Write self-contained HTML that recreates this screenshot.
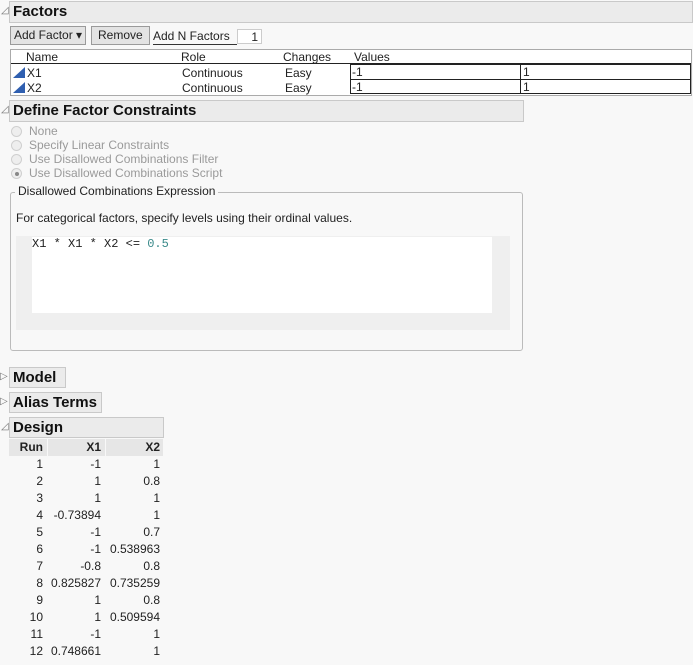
<!DOCTYPE html>
<html><head><style>
body{margin:0;width:693px;height:665px;background:#f8f8f8;font-family:"Liberation Sans",sans-serif;font-size:12px;color:#222;position:relative;overflow:hidden}
.a{position:absolute}
.hdr{position:absolute;background:#ebebeb;border:1px solid #c9c9c9;font-weight:bold;font-size:15px;color:#111;box-sizing:border-box;padding-left:3px;line-height:19px}
.tri{position:absolute;font-size:10px;color:#777}
.btn{position:absolute;background:#e3e3e3;border:1px solid #9a9a9a;box-sizing:border-box;height:19px;line-height:17px;padding-left:3px}
.rad{position:absolute;left:11px;width:11px;height:11px;border-radius:50%;border:1px solid #cfcfcf;background:#eee;box-sizing:border-box}
.rt{position:absolute;left:29px;color:#9a9a9a}
.dt{position:absolute;text-align:right;height:17px;line-height:17px}
</style></head><body>
<div class="tri" style="left:1px;top:5px">◿</div>
<div class="hdr" style="left:9px;top:1px;width:684px;height:22px">Factors</div>
<div class="btn" style="left:10px;top:26px;width:76px">Add Factor ▾</div>
<div class="btn" style="left:91px;top:26px;width:59px;padding-left:6px">Remove</div>
<div class="a" style="left:153px;top:29px;width:84px;border-bottom:1px solid #333;height:15px">Add N Factors</div>
<div class="a" style="left:237px;top:29px;width:25px;height:15px;background:#fff;border:1px solid #ccc;box-sizing:border-box;text-align:right;padding-right:3px">1</div>
<div class="a" style="left:10px;top:49px;width:682px;height:47px;background:#fff;border:1px solid #aaa;box-sizing:border-box"></div>
<div class="a" style="left:11px;top:63px;width:680px;border-top:1px solid #222"></div>
<div class="a" style="left:26px;top:50px">Name</div><div class="a" style="left:181px;top:50px">Role</div><div class="a" style="left:283px;top:50px">Changes</div><div class="a" style="left:354px;top:50px">Values</div>
<svg class="a" style="left:13px;top:67px" width="14" height="26"><polygon points="0,11 12,0 12,11" fill="#2f5fb0"/><polygon points="0,26 12,15 12,26" fill="#2f5fb0"/></svg>
<div class="a" style="left:27px;top:66px">X1</div><div class="a" style="left:182px;top:66px">Continuous</div><div class="a" style="left:285px;top:66px">Easy</div>
<div class="a" style="left:27px;top:81px">X2</div><div class="a" style="left:182px;top:81px">Continuous</div><div class="a" style="left:285px;top:81px">Easy</div>
<div class="a" style="left:350px;top:64px;width:341px;height:30px;border:1px solid #222;box-sizing:border-box"></div>
<div class="a" style="left:350px;top:79px;width:341px;border-top:1px solid #222"></div>
<div class="a" style="left:520px;top:64px;height:30px;border-left:1px solid #222"></div>
<div class="a" style="left:352px;top:65px">-1</div><div class="a" style="left:523px;top:65px">1</div>
<div class="a" style="left:352px;top:80px">-1</div><div class="a" style="left:523px;top:80px">1</div>
<div class="tri" style="left:1px;top:104px">◿</div>
<div class="hdr" style="left:9px;top:100px;width:515px;height:22px">Define Factor Constraints</div>
<div class="rad" style="top:126px"></div><div class="rt" style="top:124px">None</div>
<div class="rad" style="top:140px"></div><div class="rt" style="top:138px">Specify Linear Constraints</div>
<div class="rad" style="top:154px"></div><div class="rt" style="top:152px">Use Disallowed Combinations Filter</div>
<div class="rad" style="top:168px"></div><div class="a" style="left:15px;top:172px;width:4px;height:4px;border-radius:50%;background:#888"></div><div class="rt" style="top:166px">Use Disallowed Combinations Script</div>
<div class="a" style="left:10px;top:192px;width:513px;height:159px;border:1px solid #bbb;border-radius:3px;box-sizing:border-box"></div>
<div class="a" style="left:15px;top:184px;background:#f8f8f8;padding:0 3px">Disallowed Combinations Expression</div>
<div class="a" style="left:16px;top:211px">For categorical factors, specify levels using their ordinal values.</div>
<div class="a" style="left:16px;top:236px;width:494px;height:94px;background:#efefef"></div>
<div class="a" style="left:32px;top:237px;width:460px;height:76px;background:#fff"></div>
<div class="a" style="left:32px;top:237px;font-family:'Liberation Mono',monospace;font-size:12px">X1 * X1 * X2 &lt;= <span style="color:#3a8a8a">0.5</span></div>
<div class="tri" style="left:0;top:371px">▷</div>
<div class="hdr" style="left:9px;top:367px;width:57px;height:21px">Model</div>
<div class="tri" style="left:0;top:396px">▷</div>
<div class="hdr" style="left:9px;top:392px;width:93px;height:21px">Alias Terms</div>
<div class="tri" style="left:1px;top:421px">◿</div>
<div class="hdr" style="left:9px;top:417px;width:155px;height:21px">Design</div>
<div class="a" style="left:9px;top:439px;width:38px;height:17px;background:#e6e6e6"></div>
<div class="a" style="left:48px;top:439px;width:57px;height:17px;background:#e6e6e6"></div>
<div class="a" style="left:106px;top:439px;width:57px;height:17px;background:#e6e6e6"></div>
<div class="dt" style="left:9px;top:439px;width:34px;font-weight:bold">Run</div>
<div class="dt" style="left:48px;top:439px;width:53px;font-weight:bold">X1</div>
<div class="dt" style="left:106px;top:439px;width:54px;font-weight:bold">X2</div>
<div class="a" style="left:0;top:456px">
<div class="dt" style="left:9px;top:0;width:34px;line-height:17px">1<br>2<br>3<br>4<br>5<br>6<br>7<br>8<br>9<br>10<br>11<br>12</div>
<div class="dt" style="left:48px;top:0;width:53px">-1<br>1<br>1<br>-0.73894<br>-1<br>-1<br>-0.8<br>0.825827<br>1<br>1<br>-1<br>0.748661</div>
<div class="dt" style="left:106px;top:0;width:54px">1<br>0.8<br>1<br>1<br>0.7<br>0.538963<br>0.8<br>0.735259<br>0.8<br>0.509594<br>1<br>1</div>
</div>
</body></html>
